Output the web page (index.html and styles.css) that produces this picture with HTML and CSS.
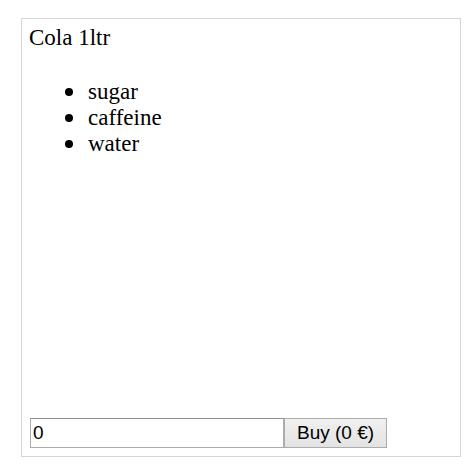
FILE: index.html
```html
<!DOCTYPE html>
<html>
<head>
<meta charset="utf-8">
<link rel="stylesheet" href="styles.css">
</head>
<body>
<div class="card">
  <div class="title">Cola 1ltr</div>
  <ul class="ingredients">
    <li>sugar</li>
    <li>caffeine</li>
    <li>water</li>
  </ul>
  <div class="buy-row">
    <input class="qty" type="text" value="0">
    <button class="buy">Buy (0 €)</button>
  </div>
</div>
</body>
</html>
```
FILE: styles.css
```css
html, body {
  margin: 0;
  padding: 0;
  background: #fff;
}

.card {
  box-sizing: border-box;
  margin: 18px 0 0 21px;
  width: 440px;
  height: 439px;
  border: 1px solid #d6d6d6;
  padding: 6px 8px 8px 7px;
  display: flex;
  flex-direction: column;
  font-family: "Liberation Serif", "Times New Roman", serif;
  font-size: 23px;
  color: #000;
}

.title {
  line-height: 26px;
}

.ingredients {
  margin: 28px 0 0 0;
  padding: 0 0 0 59px;
  list-style: none;
}

.ingredients li {
  line-height: 26px;
}

.ingredients li::before {
  content: "";
  display: inline-block;
  width: 8px;
  height: 8px;
  border-radius: 50%;
  background: #000;
  margin-left: -23px;
  margin-right: 15px;
  vertical-align: 3px;
}

.buy-row {
  margin-top: auto;
  margin-left: 1px;
  display: flex;
  height: 30px;
}

.qty {
  box-sizing: border-box;
  width: 254px;
  height: 30px;
  margin: 0;
  border: 1px solid #ababab;
  border-top-color: #8f8f8f;
  padding: 0 0 0 2px;
  font-family: "Liberation Sans", Arial, sans-serif;
  font-size: 19px;
  color: #000;
  background: #fff;
  outline: none;
}

.buy {
  box-sizing: border-box;
  width: 103px;
  height: 30px;
  margin: 0;
  border: 1px solid #acacac;
  border-radius: 0;
  background: linear-gradient(#f0f0f0, #e3e3e3);
  font-family: "Liberation Sans", Arial, sans-serif;
  font-size: 19px;
  color: #000;
  padding: 0;
}
```
